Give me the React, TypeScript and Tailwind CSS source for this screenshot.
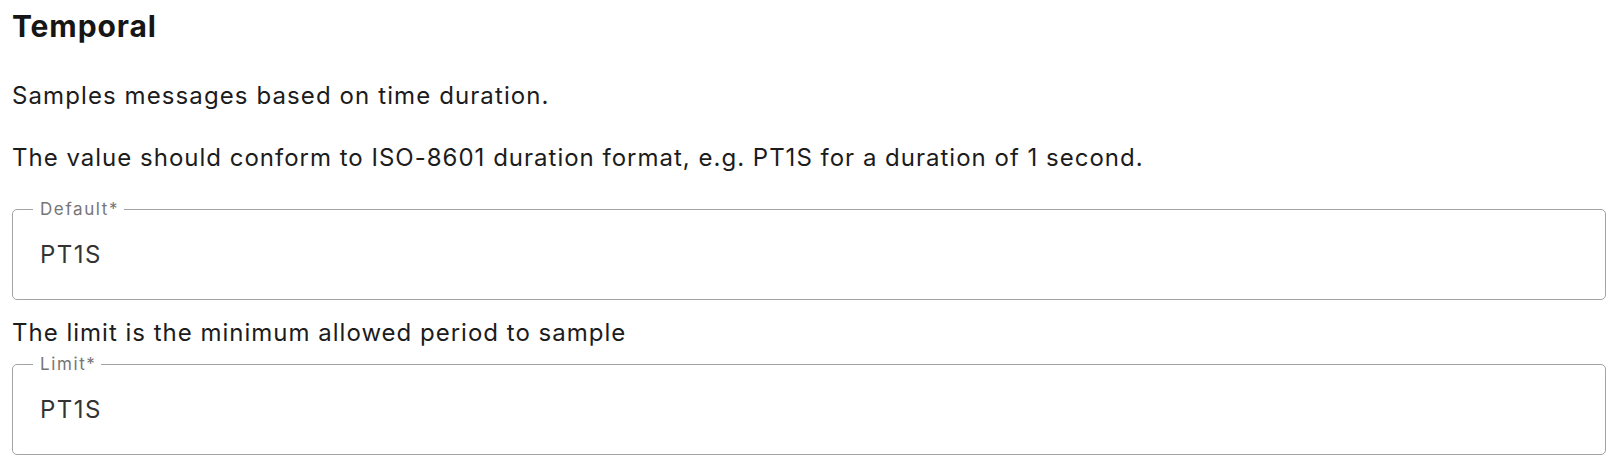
import React from "react";

type FieldProps = {
  label: string;
  value: string;
};

function OutlinedField({ label, value }: FieldProps) {
  return (
    <div className="relative h-[91px] rounded-[5px] border border-[#a3a3a3]">
      <span className="absolute left-[20px] top-[-11px] bg-white pl-[7px] pr-[5px] text-[17px] leading-[20px] tracking-[1.6px] text-[#767676]">
        {label}
      </span>
      <input
        readOnly
        value={value}
        className="h-full w-full bg-transparent px-[27px] text-[24px] tracking-[1.5px] text-[#333] outline-none"
      />
    </div>
  );
}

export default function App() {
  return (
    <div className="min-h-screen bg-white pl-3 pr-4 pt-[8px] font-['Inter','Noto_Sans',sans-serif] text-[#1c1c1c]">
      <h2 className="text-[30px] font-bold leading-[36px] tracking-[0.9px] text-[#161616]">Temporal</h2>
      <p className="mt-[36px] text-[24px] leading-[32px] tracking-[1.1px]">
        Samples messages based on time duration.
      </p>
      <p className="mt-[30px] text-[24px] leading-[32px] tracking-[1px]">
        The value should conform to ISO-8601 duration format, e.g. PT1S for a duration of 1 second.
      </p>
      <div className="mt-[35px]">
        <OutlinedField label="Default*" value="PT1S" />
      </div>
      <p className="mt-[17px] text-[24px] leading-[32px] tracking-[1px]">
        The limit is the minimum allowed period to sample
      </p>
      <div className="mt-[15px]">
        <OutlinedField label="Limit*" value="PT1S" />
      </div>
    </div>
  );
}
